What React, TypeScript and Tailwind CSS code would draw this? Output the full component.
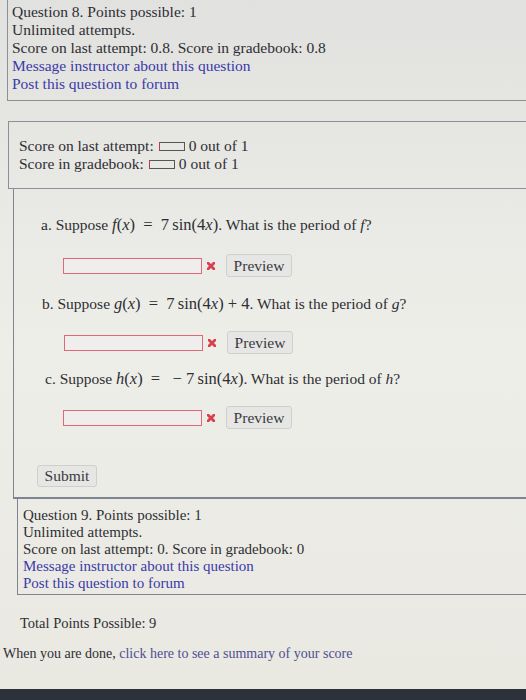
import React from "react";

const serif = { fontFamily: '"Liberation Serif", "Times New Roman", serif' };

function XIcon() {
  return (
    <svg width="8" height="8" viewBox="0 0 8 8" className="shrink-0">
      <path d="M1 1 L7 7 M7 1 L1 7" stroke="#d8404f" strokeWidth="2.8" strokeLinecap="square" />
    </svg>
  );
}

function AnswerRow({ ml }: { ml: string }) {
  return (
    <div className={`flex items-center ${ml}`}>
      <div className="w-[139px] h-[16px] border border-[#de6a78] bg-[#f0eeec]" />
      <div className="ml-[5px]">
        <XIcon />
      </div>
      <button className="ml-[11px] h-[23px] w-[66px] rounded-[3px] border border-[#cfcfcd] bg-[#e6e6e4] text-[15.5px] text-[#3a3a3e] leading-none">
        Preview
      </button>
    </div>
  );
}

function V({ children }: { children: React.ReactNode }) {
  return <i className="italic">{children}</i>;
}

function M({ children }: { children: React.ReactNode }) {
  return <span className="text-[16.5px]">{children}</span>;
}

export default function App() {
  return (
    <div
      className="relative w-[526px] h-[700px] overflow-hidden bg-linear-to-b from-[#e1e1df] via-[#eeeee9] to-[#e9e8e1] text-[#2e2e33]"
      style={serif}
    >
      {/* Question 8 header box */}
      <div className="ml-[7px] border-l border-b border-[#8b8f9a] pl-[4px] pt-[3px] pb-[7px] text-[15.5px] leading-[18px]">
        <div>Question 8. Points possible: 1</div>
        <div>Unlimited attempts.</div>
        <div>Score on last attempt: 0.8. Score in gradebook: 0.8</div>
        <div className="text-[#3a3aa8]">Message instructor about this question</div>
        <div className="text-[#3a3aa8]">Post this question to forum</div>
      </div>

      {/* Score box */}
      <div className="mt-[20px] ml-[8px] border-l border-t border-b border-[#8b8f9a] pl-[10px] pt-[15px] pb-[15px] text-[15.5px] leading-[18px]">
        <div className="flex items-center">
          <span>Score on last attempt:</span>
          <span className="ml-[5px] inline-block w-[26px] h-[9px] border border-[#55555a] border-l-[#c03a48]" />
          <span className="ml-[4px]">0 out of 1</span>
        </div>
        <div className="flex items-center">
          <span>Score in gradebook:</span>
          <span className="ml-[5px] inline-block w-[26px] h-[9px] border border-[#55555a] border-l-[#c03a48]" />
          <span className="ml-[4px]">0 out of 1</span>
        </div>
      </div>

      {/* Questions box */}
      <div className="ml-[13px] border-l border-b-2 border-[#7f8492] pl-[27px] pt-[27px] pb-[10px] text-[15.5px] leading-[18px]">
        <div>
          a. Suppose{" "}
          <M>
            <V>f</V>(<V>x</V>) &nbsp;=&nbsp; 7&thinsp;sin(4<V>x</V>)
          </M>
          . What is the period of <V>f</V>?
        </div>
        <div className="mt-[20px]">
          <AnswerRow ml="ml-[22px]" />
        </div>
        <div className="mt-[18px] ml-[1px]">
          b. Suppose{" "}
          <M>
            <V>g</V>(<V>x</V>) &nbsp;=&nbsp; 7&thinsp;sin(4<V>x</V>) + 4
          </M>
          . What is the period of <V>g</V>?
        </div>
        <div className="mt-[18px]">
          <AnswerRow ml="ml-[23px]" />
        </div>
        <div className="mt-[16px] ml-[4px]">
          c. Suppose{" "}
          <M>
            <V>h</V>(<V>x</V>) &nbsp;= &nbsp;&nbsp;&minus; 7&thinsp;sin(4<V>x</V>)
          </M>
          . What is the period of <V>h</V>?
        </div>
        <div className="mt-[18px]">
          <AnswerRow ml="ml-[22px]" />
        </div>
        <button className="mt-[36px] ml-[-4px] h-[22px] w-[60px] rounded-[3px] border border-[#cfcfcd] bg-[#e6e6e4] text-[15.5px] text-[#3a3a3e] leading-none">
          Submit
        </button>
      </div>

      {/* Question 9 box */}
      <div className="ml-[17px] border-l border-b border-[#7f8492] pl-[5px] pt-[8px] pb-[2px] text-[15px] leading-[17px]">
        <div>Question 9. Points possible: 1</div>
        <div>Unlimited attempts.</div>
        <div>Score on last attempt: 0. Score in gradebook: 0</div>
        <div className="text-[#3a3aa8]">Message instructor about this question</div>
        <div className="text-[#3a3aa8]">Post this question to forum</div>
      </div>

      <div className="mt-[20px] ml-[20px] text-[14.5px] leading-[17px]">Total Points Possible: 9</div>
      <div className="mt-[13px] ml-[3px] text-[14px] leading-[17px]">
        When you are done, <span className="text-[#4f4f95]">click here to see a summary of your score</span>
      </div>

      <div className="absolute left-0 right-0 bottom-0 h-[11px] bg-[#2b323a]" />
    </div>
  );
}
